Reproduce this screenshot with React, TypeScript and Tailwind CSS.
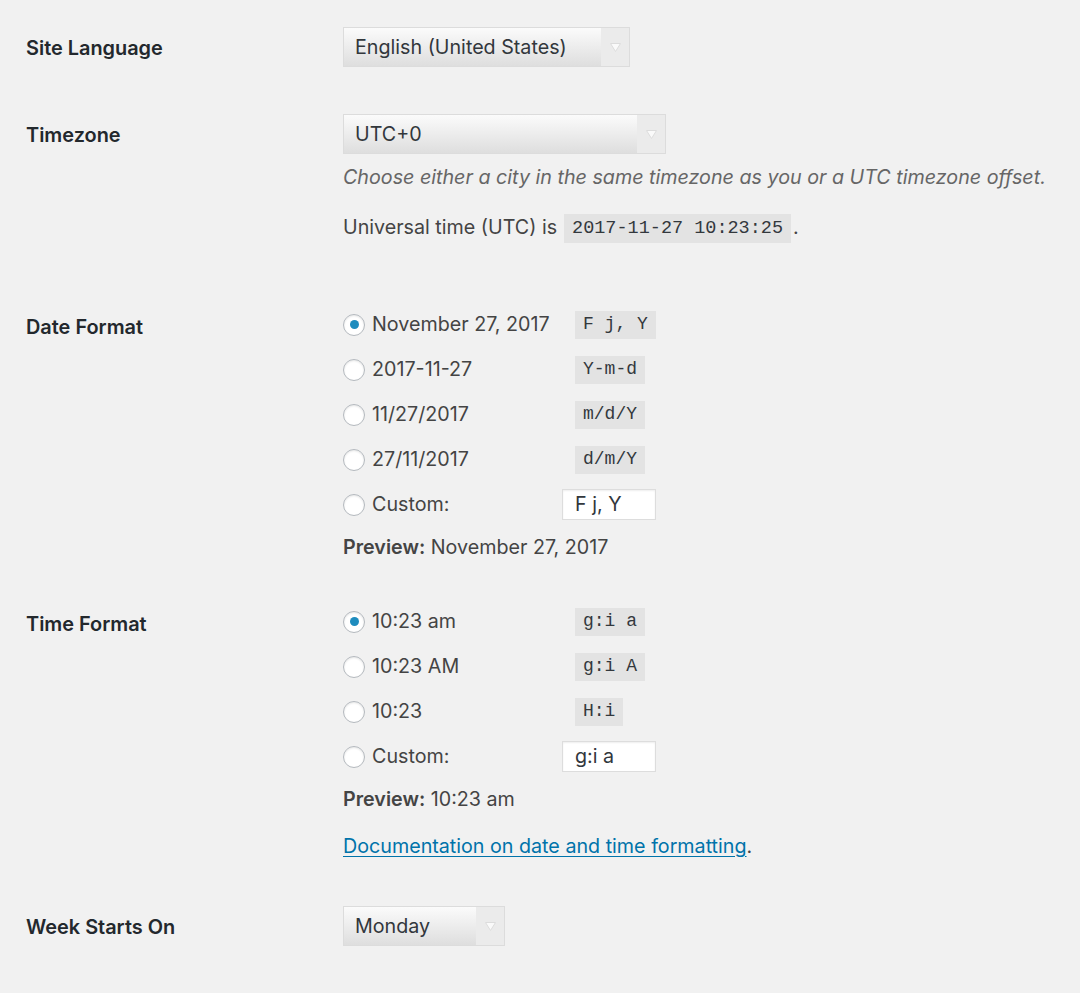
const sans = "font-['Inter','Liberation_Sans',sans-serif]";

const Select = ({ value, width }: { value: string; width: string }) => (
  <div className={`flex h-[40px] ${width} border border-[#dcdcdc] bg-[#ececec]`}>
    <div className="flex flex-1 items-center bg-gradient-to-b from-[#fbfbfb] to-[#dedede] pl-[11px] pt-[1px] text-[19.7px] text-[#32373c]">
      {value}
    </div>
    <div className="flex w-[28px] items-center justify-center bg-[#ebebeb]">
      <svg width="11" height="9" viewBox="0 0 11 9">
        <path d="M0.5 0.5 L10.5 0.5 L5.5 8.5 Z" fill="#fafafa" stroke="#dcdcdc" strokeWidth="1" />
      </svg>
    </div>
  </div>
);

const Code = ({ children }: { children: string }) => (
  <span className="inline-flex h-[28px] items-center bg-[#e3e3e3] px-[8px] font-['Liberation_Mono',monospace] text-[18px] text-[#33383d]">
    {children}
  </span>
);

const Radio = ({ checked }: { checked?: boolean }) => (
  <span className="flex h-[22px] w-[22px] items-center justify-center rounded-full border border-[#b4b9be] bg-white shadow-[inset_0_1px_2px_rgba(0,0,0,0.1)]">
    {checked && <span className="h-[9px] w-[9px] rounded-full bg-[#1e8cbe]" />}
  </span>
);

type Opt = { label: string; code?: string; custom?: string; checked?: boolean };

const RadioRow = ({ o }: { o: Opt }) => (
  <div className="flex h-[45px] items-center">
    <Radio checked={o.checked} />
    <span className="ml-[7px] w-[190px] pt-[1px] text-[19.7px] text-[#444]">{o.label}</span>
    {o.code && (
      <span className="ml-[13px]">
        <Code>{o.code}</Code>
      </span>
    )}
    {o.custom && (
      <span className="flex h-[31px] w-[94px] items-center border border-[#dddddd] bg-white pl-[12px] text-[19.7px] text-[#32373c] shadow-[inset_0_1px_2px_rgba(0,0,0,0.07)]">
        {o.custom}
      </span>
    )}
  </div>
);

const Label = ({ children, lh }: { children: string; lh: string }) => (
  <div className={`w-[317px] shrink-0 pt-[1px] text-[19.9px] font-semibold text-[#23282d] ${lh}`}>{children}</div>
);

const dateOpts: Opt[] = [
  { label: "November 27, 2017", code: "F j, Y", checked: true },
  { label: "2017-11-27", code: "Y-m-d" },
  { label: "11/27/2017", code: "m/d/Y" },
  { label: "27/11/2017", code: "d/m/Y" },
  { label: "Custom:", custom: "F j, Y" },
];

const timeOpts: Opt[] = [
  { label: "10:23 am", code: "g:i a", checked: true },
  { label: "10:23 AM", code: "g:i A" },
  { label: "10:23", code: "H:i" },
  { label: "Custom:", custom: "g:i a" },
];

export default function App() {
  return (
    <div className={`min-h-[993px] w-[1080px] bg-[#f1f1f1] pl-[26px] pt-[27px] ${sans}`}>
      <div className="flex">
        <Label lh="leading-[40px]">Site Language</Label>
        <Select value="English (United States)" width="w-[287px]" />
      </div>

      <div className="mt-[46px] flex">
        <Label lh="leading-[40px]">Timezone</Label>
        <div>
          <Select value="UTC+0" width="w-[323px]" />
          <p className="mt-[9px] text-[19.7px] leading-[28px] italic text-[#666]">
            Choose either a city in the same timezone as you or a UTC timezone offset.
          </p>
          <p className="mt-[22px] flex h-[29px] items-center text-[19.7px] text-[#444]">
            Universal time (UTC) is
            <span className="ml-[7px]">
              <span className="inline-flex h-[29px] items-center bg-[#e3e3e3] px-[8px] font-['Liberation_Mono',monospace] text-[18.5px] text-[#33383d]">
                2017-11-27 10:23:25
              </span>
            </span>
            <span className="ml-[2px]">.</span>
          </p>
        </div>
      </div>

      <div className="mt-[60px] flex">
        <Label lh="leading-[49px]">Date Format</Label>
        <div>
          {dateOpts.map((o, i) => (
            <RadioRow key={i} o={o} />
          ))}
          <p className="mt-[6px] text-[19.7px] leading-[28px] text-[#444]">
            <b className="font-semibold">Preview:</b> November 27, 2017
          </p>
        </div>
      </div>

      <div className="mt-[38px] flex">
        <Label lh="leading-[49px]">Time Format</Label>
        <div>
          {timeOpts.map((o, i) => (
            <RadioRow key={i} o={o} />
          ))}
          <p className="mt-[6px] text-[19.7px] leading-[28px] text-[#444]">
            <b className="font-semibold">Preview:</b> 10:23 am
          </p>
          <p className="mt-[19px] text-[19.7px] leading-[28px] text-[#444]">
            <a href="#" className="text-[#0073aa] underline underline-offset-[3px]">
              Documentation on date and time formatting
            </a>
            .
          </p>
        </div>
      </div>

      <div className="mt-[46px] flex">
        <Label lh="leading-[40px]">Week Starts On</Label>
        <Select value="Monday" width="w-[162px]" />
      </div>
    </div>
  );
}
